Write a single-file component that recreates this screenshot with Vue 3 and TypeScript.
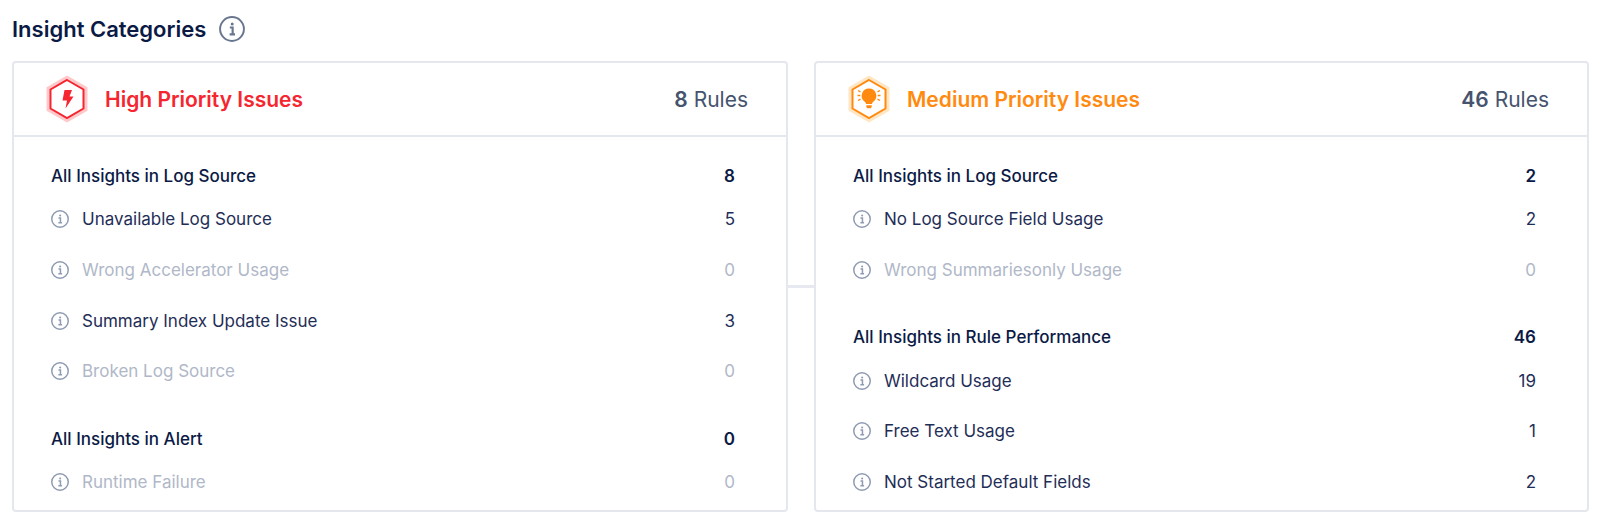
<script setup lang="ts">
interface Row {
  label: string;
  count: number;
}
interface Group {
  title: string;
  total: number;
  rows: Row[];
}
interface Card {
  kind: string;
  title: string;
  rules: number;
  groups: Group[];
}

const cards: Card[] = [
  {
    kind: "high",
    title: "High Priority Issues",
    rules: 8,
    groups: [
      {
        title: "All Insights in Log Source",
        total: 8,
        rows: [
          { label: "Unavailable Log Source", count: 5 },
          { label: "Wrong Accelerator Usage", count: 0 },
          { label: "Summary Index Update Issue", count: 3 },
          { label: "Broken Log Source", count: 0 },
        ],
      },
      {
        title: "All Insights in Alert",
        total: 0,
        rows: [{ label: "Runtime Failure", count: 0 }],
      },
    ],
  },
  {
    kind: "medium",
    title: "Medium Priority Issues",
    rules: 46,
    groups: [
      {
        title: "All Insights in Log Source",
        total: 2,
        rows: [
          { label: "No Log Source Field Usage", count: 2 },
          { label: "Wrong Summariesonly Usage", count: 0 },
        ],
      },
      {
        title: "All Insights in Rule Performance",
        total: 46,
        rows: [
          { label: "Wildcard Usage", count: 19 },
          { label: "Free Text Usage", count: 1 },
          { label: "Not Started Default Fields", count: 2 },
        ],
      },
    ],
  },
];
</script>

<template>
  <div class="page">
    <div class="title-row">
      <h1>Insight Categories</h1>
      <svg class="info big" viewBox="0 0 24 24">
        <circle cx="12" cy="12" r="11" />
        <path class="glyph" d="M10 10.6h2.6v6.2M9.8 17h5" />
        <circle class="dot" cx="12.2" cy="7.4" r="1.4" />
      </svg>
    </div>
    <div class="cards">
      <template v-for="(card, i) in cards" :key="card.kind">
        <div v-if="i > 0" class="connector"></div>
        <section class="card" :class="card.kind">
          <header class="card-head">
            <svg class="hex" viewBox="0 0 44 50">
              <path class="hex-outer" d="M22 1.5 42.5 13.2V36.8L22 48.5 1.5 36.8V13.2Z" />
              <path class="hex-inner" d="M22 6 38.5 15.5V34.5L22 44 5.500 34.500V15.500Z" />
              <path v-if="card.kind === 'high'" class="hex-icon" d="M19.500 16H27L24.500 22.500H28.500L20.500 34.500 22 26.500H17.500Z" />
              <g v-else class="bulb">
                <path class="hex-icon" d="M22 14.500a7.300 7.300 0 0 0-4.300 13.200c.9.7 1.300 1.500 1.300 2.300h6c0-.8.4-1.600 1.300-2.300A7.300 7.300 0 0 0 22 14.500Z" />
                <path class="hex-icon" d="M19.300 31.200h5.400v1.800l-1 1.300h-3.400l-1-1.300Z" />
                <path class="rays" d="M10.500 21.500h2.800M11 16.500l2.500 1.300M11 26.500l2.500-1.300M33.500 21.500h-2.800M33 16.500l-2.500 1.300M33 26.500l-2.500-1.300" />
              </g>
            </svg>
            <h2>{{ card.title }}</h2>
            <div class="rules"><b>{{ card.rules }}</b> Rules</div>
          </header>
          <div class="card-body">
            <div v-for="group in card.groups" :key="group.title" class="group">
              <div class="group-head">
                <span>{{ group.title }}</span>
                <span class="num">{{ group.total }}</span>
              </div>
              <div v-for="row in group.rows" :key="row.label" class="row" :class="{ empty: row.count === 0 }">
                <svg class="info" viewBox="0 0 24 24">
                  <circle cx="12" cy="12" r="11" />
                  <path class="glyph" d="M10 10.6h2.6v6.2M9.800 17h5" />
                  <circle class="dot" cx="12.200" cy="7.400" r="1.400" />
                </svg>
                <span class="label">{{ row.label }}</span>
                <span class="num">{{ row.count }}</span>
              </div>
            </div>
          </div>
        </section>
      </template>
    </div>
  </div>
</template>

<style>
html,
body {
  margin: 0;
  background: #fff;
}
</style>

<style scoped>
.page {
  width: 1600px;
  height: 520px;
  box-sizing: border-box;
  padding: 14px 11px 0 12px;
  font-family: Inter, "Liberation Sans", sans-serif;
  overflow: hidden;
}

.title-row {
  display: flex;
  align-items: center;
  gap: 13px;
  height: 30px;
  margin-bottom: 17px;
}

h1 {
  margin: 0;
  font-size: 22px;
  font-weight: 600;
  color: #0b1a45;
}

.info {
  flex: none;
  width: 18px;
  height: 18px;
  fill: none;
  stroke: #8f9bb3;
  stroke-width: 2;
}

.info.big {
  width: 26px;
  height: 26px;
  stroke: #68768f;
  stroke-width: 1.800;
}

.info .glyph {
  stroke-width: 2;
}

.info .dot {
  fill: #8f9bb3;
  stroke: none;
}

.info.big .dot {
  fill: #68768f;
}

.cards {
  display: grid;
  grid-template-columns: 776px 26px 775px;
}

.connector {
  height: 3px;
  margin-top: 224px;
  background: #e6e9f0;
}

.card {
  height: 451px;
  box-sizing: border-box;
  border: 2px solid #e4e7ee;
  border-radius: 4px;
  background: #fff;
  overflow: hidden;
}

.card-head {
  display: flex;
  align-items: center;
  height: 72px;
  border-bottom: 2px solid #e4e7ee;
  padding: 0 38px 0 31px;
}

.hex {
  flex: none;
  width: 44px;
  height: 50px;
  margin-right: 16px;
}

.hex-inner {
  fill: #fff;
  stroke-width: 2;
}

.high .hex-outer {
  fill: #ffc9cb;
}

.high .hex-inner {
  stroke: #f5262f;
}

.high .hex-icon {
  fill: #f5262f;
}

.medium .hex-outer {
  fill: #ffe6c4;
}

.medium .hex-inner {
  stroke: #ff8a0f;
}

.medium .hex-icon {
  fill: #ff8a0f;
}

.rays {
  fill: none;
  stroke: #ff8a0f;
  stroke-width: 1.400;
}

h2 {
  flex: 1;
  margin: 0;
  font-size: 21px;
  font-weight: 600;
}

.high h2 {
  color: #f5262f;
}

.medium h2 {
  color: #ff8a0f;
}

.rules {
  font-size: 21px;
  color: #46536e;
}

.rules b {
  font-weight: 600;
}

.card-body {
  padding: 21px 51px 0 37px;
}

.group {
  margin-bottom: 24px;
}

.group-head {
  display: flex;
  justify-content: space-between;
  align-items: center;
  height: 36px;
  font-size: 17px;
  font-weight: 500;
  color: #0b1a45;
}

.group-head .num {
  font-weight: 600;
}

.row {
  display: flex;
  align-items: center;
  height: 50.700px;
  font-size: 17px;
  color: #1f2e57;
}

.row .label {
  flex: 1;
  margin-left: 13px;
}

.row.empty {
  color: #b0b8c8;
}

.group-head + .row {
  margin-top: 0;
}
</style>
